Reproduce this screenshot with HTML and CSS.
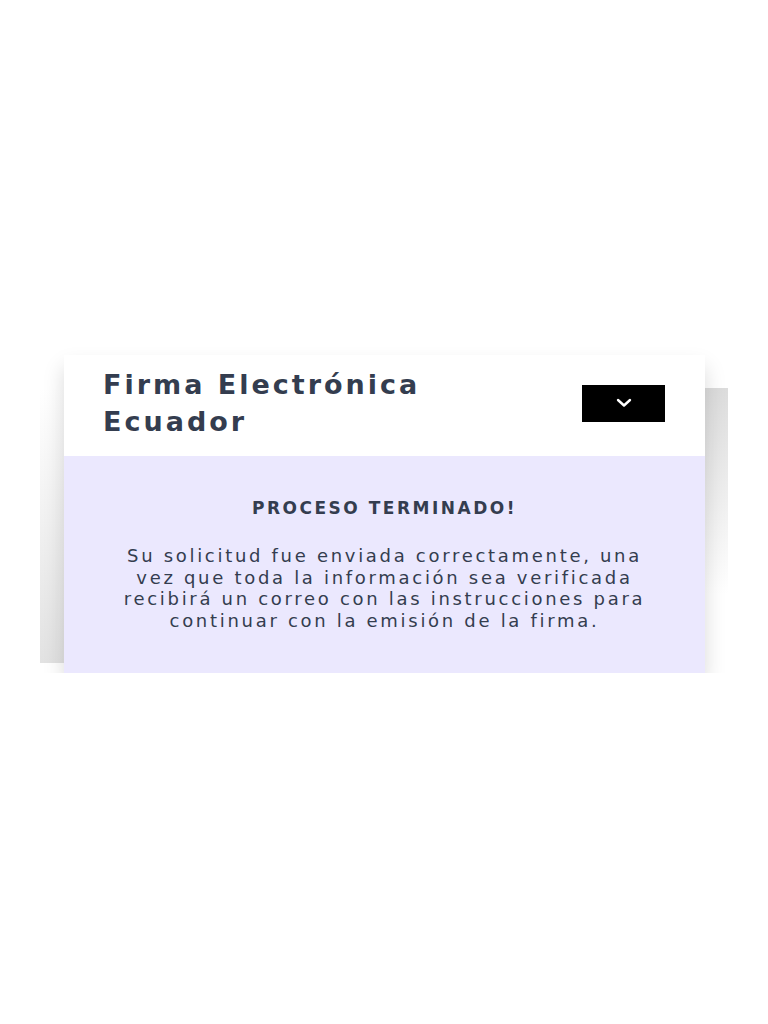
FILE: index.html
```html
<!DOCTYPE html>
<html>
<head>
    <meta charset="utf-8">
    <title>Firma Electrónica Ecuador</title>
    <link rel="stylesheet" href="styles.css">
</head>
<body>
    <div class="page">
        <div class="card-wrap">
            <div class="backdrop"></div>
            <div class="card">
                <div class="card-header">
                    <h2 class="card-title">Firma Electrónica<br>Ecuador</h2>
                    <button class="toggle" aria-label="Mostrar">
                        <svg width="16" height="10" viewBox="0 0 16 10">
                            <path d="M2 2 L8 7.5 L14 2" fill="none" stroke="#fff" stroke-width="2.4" stroke-linecap="round" stroke-linejoin="round"/>
                        </svg>
                    </button>
                </div>
                <div class="card-body">
                    <h3 class="done-title">PROCESO TERMINADO!</h3>
                    <p class="done-text">Su solicitud fue enviada correctamente, una vez que toda la información sea verificada recibirá un correo con las instrucciones para continuar con la emisión de la firma.</p>
                </div>
            </div>
        </div>
    </div>
</body>
</html>
```

FILE: styles.css
```css
body {
    margin: 0;
    background-color: #ffffff;
    font-family: "DejaVu Sans", "Open Sans", sans-serif;
    color: #343d4f;
}
.page {
    padding-top: 355px;
}
.card-wrap {
    position: relative;
    width: 641px;
    margin-left: 64px;
}
.backdrop {
    position: absolute;
    left: -24px;
    right: -23px;
    top: 33px;
    bottom: 10px;
    z-index: -1;
    background:
        linear-gradient(to bottom, #ffffff, #e2e2e2) left / 26px 100% no-repeat,
        linear-gradient(to bottom, #dcdcdc, #ffffff 75%) right / 25px 100% no-repeat;
}
.card {
    background-color: #ffffff;
    box-shadow: 0 12px 20px rgba(0,0,0,0.15);
}
.card-header {
    display: flex;
    align-items: center;
    justify-content: space-between;
    padding: 11px 40px 16px 39px;
}
.card-title {
    margin: 0;
    font-size: 27px;
    line-height: 37px;
    font-weight: bold;
    letter-spacing: 3px;
}
.toggle {
    width: 83px;
    height: 37px;
    background-color: #000000;
    border: none;
    display: flex;
    align-items: center;
    justify-content: center;
    padding: 0;
    cursor: pointer;
}
.card-body {
    background-color: #ebe8fe;
    padding: 40px 30px 42px;
    text-align: center;
}
.done-title {
    margin: 0 0 25px;
    font-size: 17px;
    line-height: 24px;
    font-weight: bold;
    letter-spacing: 2.5px;
}
.done-text {
    margin: 0 auto;
    max-width: 545px;
    font-size: 18px;
    line-height: 21.5px;
    letter-spacing: 2.7px;
}
```
